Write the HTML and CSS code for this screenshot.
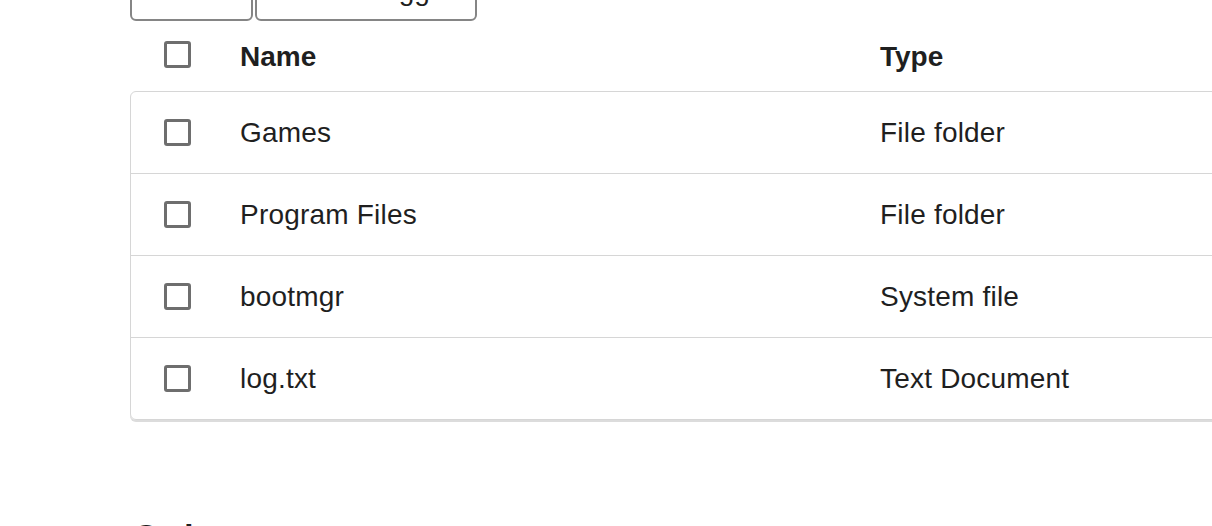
FILE: index.html
```html
<!DOCTYPE html>
<html>
<head>
<meta charset="utf-8">
<link rel="stylesheet" href="styles.css">
</head>
<body>
<div class="page">
  <div class="toolbar">
    <button class="btn btn-a">Select all</button>
    <button class="btn btn-b">Enable toggle</button>
  </div>
  <div class="head">
    <div class="cell-check"><span class="check"></span></div>
    <div class="cell-name">Name</div>
    <div class="cell-type">Type</div>
  </div>
  <div class="card">
    <div class="row">
      <div class="cell-check"><span class="check"></span></div>
      <div class="cell-name">Games</div>
      <div class="cell-type">File folder</div>
    </div>
    <div class="row">
      <div class="cell-check"><span class="check"></span></div>
      <div class="cell-name">Program Files</div>
      <div class="cell-type">File folder</div>
    </div>
    <div class="row">
      <div class="cell-check"><span class="check"></span></div>
      <div class="cell-name">bootmgr</div>
      <div class="cell-type">System file</div>
    </div>
    <div class="row">
      <div class="cell-check"><span class="check"></span></div>
      <div class="cell-name">log.txt</div>
      <div class="cell-type">Text Document</div>
    </div>
  </div>
  <h2 class="section-title">Order</h2>
</div>
</body>
</html>
```
FILE: styles.css
```css
html, body {
  margin: 0;
  padding: 0;
  background: #ffffff;
  overflow: hidden;
}
body {
  font-family: "Liberation Sans", Arial, sans-serif;
  color: #1f1f1f;
  width: 1212px;
  height: 526px;
}
.page {
  padding-left: 130px;
  margin-top: -39px;
}
.toolbar {
  display: flex;
  gap: 2px;
}
.btn {
  height: 60px;
  border: 2px solid #858585;
  border-radius: 6px;
  background: #ffffff;
  font-family: inherit;
  font-size: 28px;
  color: #1f1f1f;
  padding: 0;
  line-height: 28px;
  overflow: hidden;
}
.btn-a { width: 123px; }
.btn-b { width: 222px; }
.head {
  display: flex;
  align-items: center;
  height: 70px;
  font-weight: bold;
  font-size: 28px;
  padding-left: 1px;
  padding-top: 2px;
  box-sizing: border-box;
}
.card {
  width: 1300px;
  border: 1px solid #d6d6d6;
  border-radius: 6px;
  box-shadow: 0 2px 0 #dcdcdc;
  box-sizing: border-box;
}
.row {
  display: flex;
  align-items: center;
  height: 81px;
  font-size: 28px;
  letter-spacing: 0.2px;
  border-bottom: 1px solid #d6d6d6;
}
.row:last-child {
  border-bottom: none;
}
.cell-check {
  width: 109px;
  padding-left: 33px;
  box-sizing: border-box;
  display: flex;
  align-items: center;
}
.cell-name {
  width: 640px;
}
.check {
  display: block;
  width: 27px;
  height: 27px;
  box-sizing: border-box;
  border: 3px solid #6e6e6e;
  border-radius: 3px;
}
.head .check {
  margin-top: -5px;
}
.section-title {
  margin: 97px 0 0 3px;
  font-size: 34px;
  font-weight: bold;
}
```
